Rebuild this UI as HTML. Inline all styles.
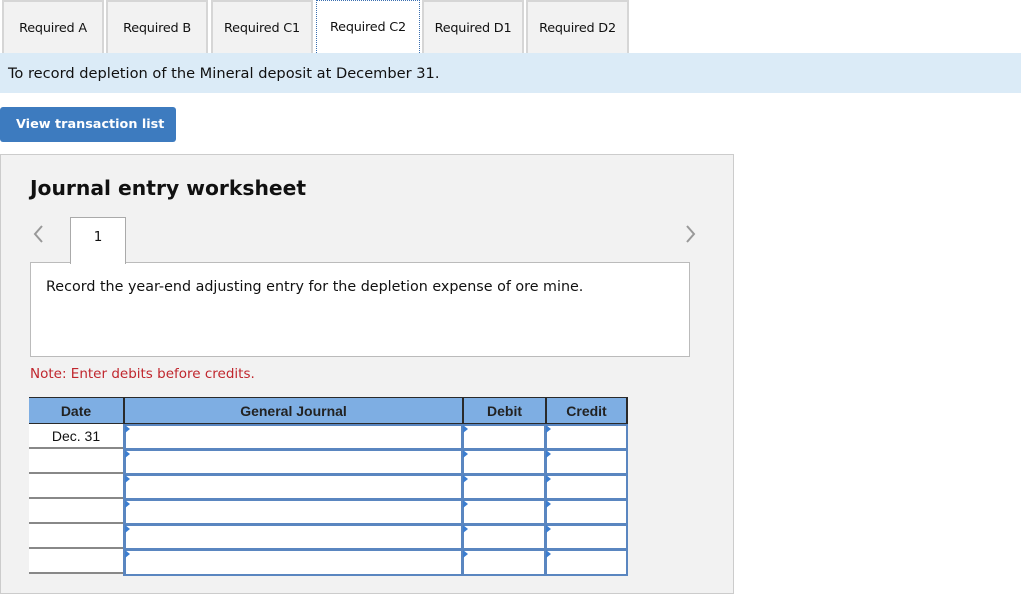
<!DOCTYPE html>
<html><head><style>
*{margin:0;padding:0;box-sizing:border-box}
body{width:1024px;height:588px;background:#fff;font-family:"DejaVu Sans","Liberation Sans",sans-serif;color:#111;position:relative;overflow:hidden}
.a{position:absolute}
.tab{position:absolute;top:0;height:53px;background:#f2f2f2;border:2px solid #d6d6d6;border-bottom:none;font-size:12.8px;text-align:center;line-height:54px;letter-spacing:-0.2px}
.tab.on{background:#fff;border:1px dotted #3a6fb0;border-bottom:none}
.band{left:0;top:53px;width:1021px;height:40px;background:#dbebf7;font-size:14.6px;line-height:42px;padding-left:8px}
.btn{left:0;top:107px;width:176px;height:35px;background:#3d7bbf;border-radius:3px;color:#fff;font-weight:bold;font-size:12.8px;line-height:36px;padding-left:16px}
.panel{left:0;top:154px;width:734px;height:440px;background:#f2f2f2;border:1px solid #ccc}
.hd{height:28px;background:#7eaee3;border-top:1px solid #2a2a2a;border-bottom:2px solid #2a2a2a;font-family:"Liberation Sans",sans-serif;font-weight:bold;font-size:14px;text-align:center;line-height:26px;color:#222}
.cell{position:absolute;background:#fff;border:2px solid #5a86c0}
.cell:before{content:"";position:absolute;left:-1px;top:-1px;border-left:5px solid #3b7dd0;border-top:4px solid transparent;border-bottom:4px solid transparent}
.dr{position:absolute;left:29px;width:94px;height:25px;background:#fff;border-bottom:2px solid #888}
</style></head><body>
<div class="tab" style="left:2px;width:102px">Required A</div>
<div class="tab" style="left:106px;width:102px">Required B</div>
<div class="tab" style="left:211px;width:102px">Required C1</div>
<div class="tab on" style="left:316px;width:104px">Required C2</div>
<div class="tab" style="left:422px;width:102px">Required D1</div>
<div class="tab" style="left:526px;width:103px">Required D2</div>
<div class="a band">To record depletion of the Mineral deposit at December 31.</div>
<div class="a btn">View transaction list</div>
<div class="a panel"></div>
<div class="a" style="left:30px;top:176px;font-size:20.3px;font-weight:bold">Journal entry worksheet</div>
<svg class="a" style="left:30px;top:224px" width="16" height="20"><path d="M12 2 L5 10 L12 18" fill="none" stroke="#999" stroke-width="2"/></svg>
<svg class="a" style="left:683px;top:224px" width="16" height="20"><path d="M4 2 L11 10 L4 18" fill="none" stroke="#999" stroke-width="2"/></svg>
<div class="a" style="left:30px;top:262px;width:660px;height:95px;background:#fff;border:1px solid #bbb"></div>
<div class="a" style="left:70px;top:217px;width:56px;height:47px;background:#fff;border:1px solid #aaa;border-bottom:none;text-align:center;line-height:38px;font-size:13.5px">1</div>
<div class="a" style="left:46px;top:279px;font-size:14.3px">Record the year-end adjusting entry for the depletion expense of ore mine.</div>
<div class="a" style="left:30px;top:366px;font-size:13.5px;color:#c0262d">Note: Enter debits before credits.</div>
<div class="a hd" style="left:29px;top:397px;width:94px">Date</div>
<div class="a hd" style="left:123px;top:397px;width:339px;border-left:2px solid #2a2a2a">General Journal</div>
<div class="a hd" style="left:462px;top:397px;width:83px;border-left:2px solid #2a2a2a">Debit</div>
<div class="a hd" style="left:545px;top:397px;width:83px;border-left:2px solid #2a2a2a;border-right:2px solid #2a2a2a">Credit</div>
<div class="dr" style="top:424px;font-family:'Liberation Sans',sans-serif;font-size:14px;text-align:center;line-height:25px">Dec. 31</div>
<div class="dr" style="top:449px"></div>
<div class="dr" style="top:474px"></div>
<div class="dr" style="top:499px"></div>
<div class="dr" style="top:524px"></div>
<div class="dr" style="top:549px"></div>
<div class="a" style="left:123px;top:424px;width:505px;height:152px;background:#5a86c0"></div>
<div class="cell" style="left:124px;top:424px;width:339px;height:26px"></div><div class="cell" style="left:462px;top:424px;width:84px;height:26px"></div><div class="cell" style="left:545px;top:424px;width:83px;height:26px"></div>
<div class="cell" style="left:124px;top:449px;width:339px;height:26px"></div><div class="cell" style="left:462px;top:449px;width:84px;height:26px"></div><div class="cell" style="left:545px;top:449px;width:83px;height:26px"></div>
<div class="cell" style="left:124px;top:474px;width:339px;height:26px"></div><div class="cell" style="left:462px;top:474px;width:84px;height:26px"></div><div class="cell" style="left:545px;top:474px;width:83px;height:26px"></div>
<div class="cell" style="left:124px;top:499px;width:339px;height:26px"></div><div class="cell" style="left:462px;top:499px;width:84px;height:26px"></div><div class="cell" style="left:545px;top:499px;width:83px;height:26px"></div>
<div class="cell" style="left:124px;top:524px;width:339px;height:26px"></div><div class="cell" style="left:462px;top:524px;width:84px;height:26px"></div><div class="cell" style="left:545px;top:524px;width:83px;height:26px"></div>
<div class="cell" style="left:124px;top:549px;width:339px;height:27px"></div><div class="cell" style="left:462px;top:549px;width:84px;height:27px"></div><div class="cell" style="left:545px;top:549px;width:83px;height:27px"></div>
</body></html>
